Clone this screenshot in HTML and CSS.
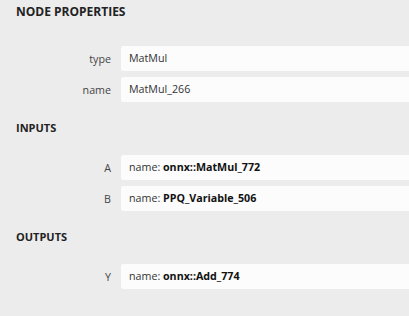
FILE: index.html
```html
<!DOCTYPE html>
<html lang="en">
<head>
    <meta charset="UTF-8">
    <meta name="viewport" content="width=device-width, initial-scale=1.0">
    <title>Node Properties</title>
    <link rel="stylesheet" href="styles.css">
</head>
<body>
    <div class="sidebar">
        <div class="sidebar-title">NODE PROPERTIES</div>

        <div class="sidebar-section first">
            <div class="sidebar-item">
                <div class="item-name">type</div>
                <div class="item-value">MatMul</div>
            </div>
            <div class="sidebar-item">
                <div class="item-name">name</div>
                <div class="item-value">MatMul_266</div>
            </div>
        </div>

        <div class="sidebar-header">INPUTS</div>
        <div class="sidebar-section">
            <div class="sidebar-item">
                <div class="item-name">A</div>
                <div class="item-value">name: <b>onnx::MatMul_772</b></div>
            </div>
            <div class="sidebar-item">
                <div class="item-name">B</div>
                <div class="item-value">name: <b>PPQ_Variable_506</b></div>
            </div>
        </div>

        <div class="sidebar-header">OUTPUTS</div>
        <div class="sidebar-section">
            <div class="sidebar-item">
                <div class="item-name">Y</div>
                <div class="item-value">name: <b>onnx::Add_774</b></div>
            </div>
        </div>
    </div>
</body>
</html>
```

FILE: styles.css
```css
body {
    margin: 0;
    background-color: #ececec;
    font-family: "Open Sans", sans-serif;
    font-size: 10.7px;
    overflow: hidden;
}

.sidebar {
    width: 409px;
    overflow: hidden;
}

.sidebar-title {
    font-size: 12px;
    font-weight: bold;
    color: #222;
    padding: 2px 16px 0 16px;
    height: 26px;
    line-height: 20px;
}

.sidebar-header {
    font-size: 11px;
    font-weight: bold;
    color: #222;
    padding: 0 16px;
    line-height: 20px;
    margin-top: 16px;
}

.sidebar-section {
    display: flex;
    flex-direction: column;
    gap: 6px;
    margin-top: 17px;
    margin-right: -20px;
}

.sidebar-section.first {
    margin-top: 18px;
}

.sidebar-item {
    display: grid;
    grid-template-columns: 111px 1fr;
    gap: 10px;
    align-items: center;
}

.item-name {
    text-align: right;
    color: #444;
}

.item-value {
    background-color: #fcfcfc;
    border-radius: 2px;
    height: 25px;
    line-height: 25px;
    padding: 0 8px;
    color: #333;
}

.item-value b {
    color: #111;
}
```
